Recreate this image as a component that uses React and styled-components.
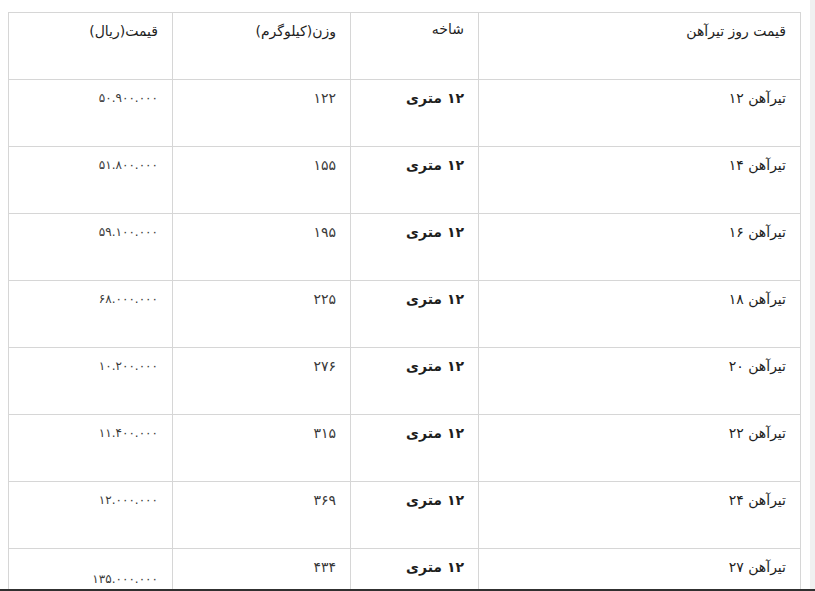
import React from "react";
import styled, { createGlobalStyle } from "styled-components";

const GlobalStyle = createGlobalStyle`
  html, body {
    margin: 0;
    padding: 0;
    background: #fff;
    overflow: hidden;
  }
  body {
    font-family: "DejaVu Sans", "Noto Sans", sans-serif;
  }
`;

const rows = [
  { name: "تیرآهن ۱۲", branch: "۱۲ متری", weight: "۱۲۲", price: "۵۰.۹۰۰.۰۰۰" },
  { name: "تیرآهن ۱۴", branch: "۱۲ متری", weight: "۱۵۵", price: "۵۱.۸۰۰.۰۰۰" },
  { name: "تیرآهن ۱۶", branch: "۱۲ متری", weight: "۱۹۵", price: "۵۹.۱۰۰.۰۰۰" },
  { name: "تیرآهن ۱۸", branch: "۱۲ متری", weight: "۲۲۵", price: "۶۸.۰۰۰.۰۰۰" },
  { name: "تیرآهن ۲۰", branch: "۱۲ متری", weight: "۲۷۶", price: "۱۰.۲۰۰.۰۰۰" },
  { name: "تیرآهن ۲۲", branch: "۱۲ متری", weight: "۳۱۵", price: "۱۱.۴۰۰.۰۰۰" },
  { name: "تیرآهن ۲۴", branch: "۱۲ متری", weight: "۳۶۹", price: "۱۲.۰۰۰.۰۰۰" },
  { name: "تیرآهن ۲۷", branch: "۱۲ متری", weight: "۴۳۴", price: "۱۳۵.۰۰۰.۰۰۰", low: true },
];

export default function App() {
  return (
    <>
      <GlobalStyle />
      <Screen>
        <Body>
          <Content>
            <PriceTable dir="rtl">
              <colgroup>
                <col style={{ width: 322 }} />
                <col style={{ width: 128 }} />
                <col style={{ width: 178 }} />
                <col style={{ width: 164 }} />
              </colgroup>
              <tbody>
                <Row>
                  <Cell>قیمت روز تیرآهن</Cell>
                  <Cell $raise>شاخه</Cell>
                  <Cell>وزن(کیلوگرم)</Cell>
                  <Cell>قیمت(ریال)</Cell>
                </Row>
                {rows.map((r) => (
                  <Row key={r.name}>
                    <Cell>{r.name}</Cell>
                    <Cell $bold>{r.branch}</Cell>
                    <Cell $muted>{r.weight}</Cell>
                    <Cell $muted $small $low={r.low}>{r.price}</Cell>
                  </Row>
                ))}
              </tbody>
            </PriceTable>
          </Content>
          <Scrollbar />
        </Body>
        <BottomBar />
      </Screen>
    </>
  );
}

const Screen = styled.div`
  width: 815px;
  height: 591px;
  display: flex;
  flex-direction: column;
  overflow: hidden;
`;

const Body = styled.div`
  flex: 1;
  display: flex;
  min-height: 0;
`;

const Content = styled.div`
  flex: 1;
  padding: 12px 0 0 8px;
  overflow: hidden;
`;

const Scrollbar = styled.div`
  width: 5px;
  background: #f0f0f0;
`;

const BottomBar = styled.div`
  height: 2px;
  background: #303030;
`;

const PriceTable = styled.table`
  width: 793px;
  border-collapse: collapse;
  table-layout: fixed;
  border: 1px solid #d6d6d6;
`;

const Row = styled.tr`
  height: 67px;
`;

const Cell = styled.td`
  border: 1px solid #d6d6d6;
  vertical-align: top;
  text-align: right;
  padding: 9px 14px 0 10px;
  padding-top: ${(p) => (p.$low ? "21px" : p.$raise ? "7px" : "9px")};
  font-size: ${(p) => (p.$small ? "12px" : "14px")};
  line-height: 18px;
  font-weight: ${(p) => (p.$bold ? 700 : 400)};
  color: ${(p) => (p.$muted ? "#3a3a3a" : "#1e1e1e")};
`;
